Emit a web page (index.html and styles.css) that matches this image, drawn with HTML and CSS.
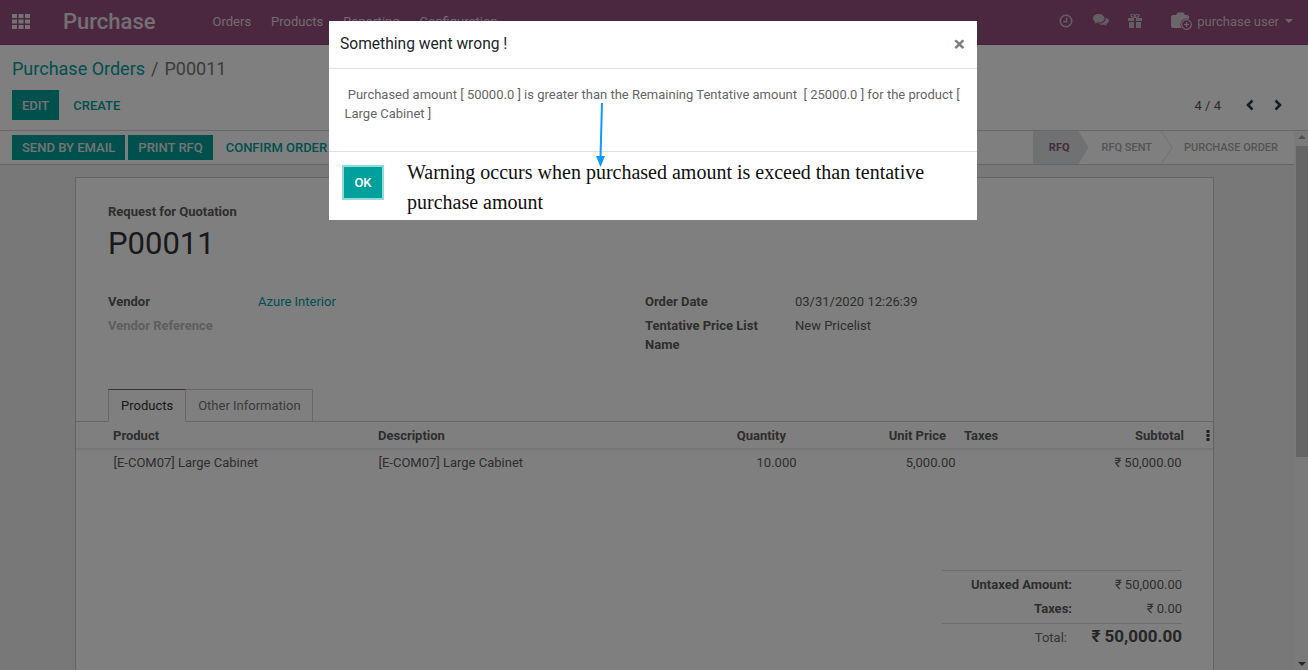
FILE: index.html
```html
<!DOCTYPE html>
<html lang="en">
<head>
  <meta charset="UTF-8">
  <meta name="viewport" content="width=device-width, initial-scale=1.0">
  <title>Purchase Orders</title>
  <link rel="stylesheet" href="styles.css">
</head>
<body>
  <div class="app">
    <header class="navbar">
      <svg class="apps-icon" width="18" height="15" viewBox="0 0 18 15">
        <path d="M0 0h5v4H0zM6.500 0h5v4h-5zM13 0h5v4h-5zM0 5.500h5v4H0zM6.500 5.500h5v4h-5zM13 5.500h5v4h-5zM0 11h5v4H0zM6.500 11h5v4h-5zM13 11h5v4h-5z"/>
      </svg>
      <span class="brand">Purchase</span>
      <nav class="menu">
        <a>Orders</a>
        <a>Products</a>
        <a>Reporting</a>
        <a>Configuration</a>
      </nav>
      <div class="systray">
        <svg class="tray-clock" width="14" height="14" viewBox="0 0 14 14">
          <circle cx="7" cy="7" r="5.700" fill="none" stroke="currentColor" stroke-width="1.600"/>
          <path d="M7.600 3.500v4.200H4.400" fill="none" stroke="currentColor" stroke-width="1.400"/>
        </svg>
        <svg class="tray-chat" width="16" height="14" viewBox="0 0 16 14">
          <path d="M5.800 0C2.600 0 0 1.900 0 4.300c0 1.400.9 2.600 2.200 3.400-.2.700-.6 1.300-1.100 1.800 1 0 2.100-.4 3-1.100.5.100 1.100.2 1.700.2 3.200 0 5.800-1.900 5.800-4.300S9 0 5.800 0z"/>
          <path d="M12.700 3.800c.1.200.1.400.1.600 0 2.900-3 5-6.700 5h-.6c1 .9 2.500 1.400 4.100 1.400.5 0 1 0 1.500-.2.800.7 1.900 1.100 3.100 1.200-.5-.5-.9-1.200-1.100-1.900 1.700-.7 2.900-1.900 2.900-3.100 0-1.300-1.300-2.300-3.300-3z"/>
        </svg>
        <svg class="tray-gift" width="14" height="14" viewBox="0 0 14 14">
          <path d="M0 4h6v3H0zM8 4h6v3H8zM1 8h5v6H1zM8 8h5v6H8z"/>
          <path d="M7 3.500C5 3.500 3 3 3 1.600 3 .600 3.800 0 4.600 0 6 0 6.800 1.700 7 3.500zm0 0c.2-1.800 1-3.500 2.400-3.500.8 0 1.600.6 1.600 1.600C11 3 9 3.500 7 3.500z" fill="none" stroke="currentColor" stroke-width="1.200"/>
        </svg>
        <div class="user">
          <svg class="avatar" width="22" height="19" viewBox="0 0 22 19">
            <path d="M2 3h3l1.500-2.500h6L14 3h2c1.100 0 2 .9 2 2v5H2z"/>
            <path d="M0 5c0-1.100.9-2 2-2h4v13H2c-1.100 0-2-.9-2-2z"/>
            <circle cx="9" cy="9" r="4.500" fill="none" stroke="currentColor" stroke-width="2"/>
            <path d="M2 10h10v6H2z"/>
            <circle cx="15.500" cy="12.500" r="6" fill="#965080"/>
            <circle cx="15.500" cy="12.500" r="4.800" fill="none" stroke="currentColor" stroke-width="1.200"/>
            <path d="M15.500 10v5M13 12.500h5" stroke="currentColor" stroke-width="1.200"/>
          </svg>
          <span>purchase user</span>
          <i class="caret"></i>
        </div>
      </div>
    </header>

    <section class="control-panel">
      <div class="breadcrumb"><a>Purchase Orders</a><span class="sep">/</span><span class="current">P00011</span></div>
      <div class="cp-buttons">
        <div class="cp-left">
          <button class="btn btn-primary edit-btn">EDIT</button>
          <button class="btn btn-link">CREATE</button>
        </div>
        <div class="pager">
          <span class="pager-count">4 / 4</span>
          <svg width="10" height="12" viewBox="0 0 10 12"><path d="M7.500 1.500 3 6l4.500 4.500" fill="none" stroke="currentColor" stroke-width="2.600"/></svg>
          <svg width="10" height="12" viewBox="0 0 10 12"><path d="M2.500 1.500 7 6l-4.500 4.500" fill="none" stroke="currentColor" stroke-width="2.600"/></svg>
        </div>
      </div>
    </section>

    <div class="main">
      <div class="main-column">
        <div class="statusbar">
          <div class="status-actions">
            <button class="btn btn-dark">SEND BY EMAIL</button>
            <button class="btn btn-dark">PRINT RFQ</button>
            <button class="btn btn-link">CONFIRM ORDER</button>
          </div>
          <div class="steps">
            <span class="step step-active">RFQ</span>
            <span class="step">RFQ SENT</span>
            <svg class="chevron" width="11" height="33" viewBox="0 0 11 33"><path d="M0 0 11 16.500 0 33"/></svg>
            <span class="step step-last">PURCHASE ORDER</span>
          </div>
        </div>

        <div class="content">
          <div class="sheet">
            <div class="sheet-head">
              <div class="doc-label">Request for Quotation</div>
              <h1 class="doc-name">P00011</h1>
            </div>

            <div class="fields">
              <div class="field-col">
                <div class="field"><label>Vendor</label><a>Azure Interior</a></div>
                <div class="field"><label class="muted">Vendor Reference</label><span></span></div>
              </div>
              <div class="field-col">
                <div class="field"><label>Order Date</label><span>03/31/2020 12:26:39</span></div>
                <div class="field"><label>Tentative Price List Name</label><span>New Pricelist</span></div>
              </div>
            </div>

            <div class="tabs">
              <span class="tab tab-active">Products</span>
              <span class="tab">Other Information</span>
            </div>

            <div class="lines-head">
              <span>Product</span>
              <span>Description</span>
              <span class="num">Quantity</span>
              <span class="num">Unit Price</span>
              <span class="taxes-col">Taxes</span>
              <span class="num">Subtotal</span>
              <svg class="kebab" width="4" height="11" viewBox="0 0 4 11"><path d="M.5 0h3v3h-3zM.5 4h3v3h-3zM.5 8h3v3h-3z"/></svg>
            </div>
            <div class="lines-row">
              <span>[E-COM07] Large Cabinet</span>
              <span>[E-COM07] Large Cabinet</span>
              <span class="num">10.000</span>
              <span class="num">5,000.00</span>
              <span class="num">₹ 50,000.00</span>
            </div>

            <div class="totals">
              <div class="total-row"><b>Untaxed Amount:</b><span>₹ 50,000.00</span></div>
              <div class="total-row"><b>Taxes:</b><span>₹ 0.00</span></div>
              <div class="total-row grand"><span class="grand-label">Total:</span><b class="grand-value">₹ 50,000.00</b></div>
            </div>
          </div>
        </div>
      </div>

      <div class="scrollbar">
        <i class="arrow-up"></i>
        <div class="thumb"></div>
        <i class="arrow-down"></i>
      </div>
    </div>
  </div>

  <div class="backdrop"></div>

  <div class="modal">
    <div class="modal-header">
      <h4>Something went wrong !</h4>
      <span class="close">×</span>
    </div>
    <div class="modal-body">
      <p>&nbsp;Purchased amount [ 50000.0 ] is greater than the Remaining Tentative amount &nbsp;[ 25000.0 ] for the product [ Large Cabinet ]</p>
    </div>
    <div class="modal-footer">
      <button class="btn-ok">OK</button>
      <p class="note">Warning occurs when purchased amount is exceed than tentative purchase amount</p>
    </div>
  </div>

  <svg class="annotation" width="12" height="66" viewBox="0 0 12 66">
    <path d="M7 0 5.500 54" stroke="#0f9bfb" stroke-width="2" fill="none"/>
    <path d="M1 53h9L5.500 64z" fill="#0f9bfb"/>
  </svg>
</body>
</html>
```

FILE: styles.css
```css
*{box-sizing:border-box;}
html,body{height:100%;}
body{margin:0; overflow:hidden; font-family:Roboto,"Noto Sans",sans-serif; font-size:13px; color:#5c5c5c; background:#fff;}
a{color:#00a09d;}
.app{display:flex; flex-direction:column; height:100vh;}

/* top bar */
.navbar{display:flex; align-items:center; flex:0 0 45px; padding:0 15px 2px 12px; background:#965080; border-bottom:1px solid #8a4a75; color:#fff;}
.apps-icon{fill:#e6e6e6; flex:none;}
.brand{margin-left:33px; font-size:22px; font-weight:500; color:#e6e0e4;}
.menu{display:flex; gap:20px; margin-left:57px;}
.menu a{color:#e0d8dd;}
.systray{display:flex; align-items:center; margin-left:auto; color:#c9bcc4;}
.systray svg{fill:currentColor; flex:none;}
.tray-chat{margin-left:20px;}
.tray-gift{margin-left:19px;}
.user{display:flex; align-items:center; margin-left:29px; color:#d6ccd2;}
.user span{margin-left:4px; margin-right:6px;}
.caret{border:4px solid transparent; border-top-color:currentColor; border-bottom:0;}

/* control panel */
.control-panel{flex:0 0 86px; padding:13px 25px 0 12px; border-bottom:1px solid #cfcfcf;}
.breadcrumb{display:flex; align-items:center; height:20px; font-size:18px;}
.breadcrumb a{color:#00a09d;}
.sep{margin:0 6px; color:#777;}
.current{color:#777;}
.cp-buttons{display:flex; justify-content:space-between; align-items:center; margin-top:12px;}
.cp-left{display:flex;}
.btn{height:25px; padding:0 10px; border:0; font-family:inherit; font-size:13px; font-weight:500;}
.btn-primary{height:30px; background:#00a09d; color:#e8e8e8;}
.btn-dark{background:#00a09d; color:#e8e8e8;}
.btn-link{height:30px; padding:0 14px; background:transparent; color:#00a09d;}
.pager{display:flex; align-items:center; gap:18px; color:#2c3e4a;}
.pager-count{margin-right:6px; color:#555;}

/* main area */
.main{display:flex; flex:1; min-height:0;}
.main-column{display:flex; flex-direction:column; flex:1; min-width:0;}
.statusbar{display:flex; justify-content:space-between; flex:0 0 34px; padding-left:12px; border-bottom:1px solid #cfcfcf;}
.status-actions{display:flex; align-items:center; gap:3px;}
.status-actions .btn-link{height:25px; padding:0 10px;}
.steps{display:flex; align-items:stretch;}
.step{display:flex; align-items:center; padding:0 9px 0 13px; font-size:11px; font-weight:500; color:#a8a8a8;}
.step-active{padding:0 19px 0 16px; background:#dee2e6; color:#875a7b; font-weight:700; clip-path:polygon(0 0,calc(100% - 10px) 0,100% 50%,calc(100% - 10px) 100%,0 100%);}
.step-last{padding:0 16px 0 12px;}
.chevron{fill:none; stroke:#dee2e6; stroke-width:1; flex:none;}

.content{flex:1; min-height:0; overflow:hidden; padding:12px 0 0 75px; background:#f0f0f0;}
.sheet{width:1139px; height:600px; padding-top:26px; background:#fff; border:1px solid #c9c9c9;}
.sheet-head{padding-left:32px;}
.doc-label{font-weight:700;}
.doc-name{margin:6px 0 0; font-size:31px; line-height:38px; font-weight:400; color:#333;}

.fields{display:grid; grid-template-columns:537px 1fr; margin-top:29px; padding-left:32px;}
.field{display:flex; margin-bottom:5px; line-height:19px;}
.field label{width:150px; flex:none; padding-right:20px; font-weight:700;}
.field a{color:#00a09d;}
.muted{color:#bdbdbd;}

.tabs{display:flex; margin-top:30px; padding-left:32px; border-bottom:1px solid #cfcfcf;}
.tab{height:33px; margin-bottom:-1px; padding:0 12px; line-height:32px; border:1px solid #cfcfcf; border-left:0; color:#777;}
.tab:last-child{padding-right:11px;}
.tab-active{border-left:1px solid #cfcfcf; border-top:1px solid #875a7b; border-bottom-color:#fff; color:#333;}

.lines-head,.lines-row{display:grid; align-items:center;}
.lines-head{grid-template-columns:265px 302px 106px 160px 18px 100px 120px 31px; height:27px; padding-left:37px; font-weight:700; border-bottom:1px solid #e8e8e8; box-shadow:0 1px 2px rgba(0,0,0,.08);}
.taxes-col{grid-column:6;}
.kebab{fill:#444; margin-left:22px;}
.lines-row{grid-template-columns:265px 308px 110px 159px 226px; height:27px; padding-left:37.500px;}
.num{text-align:right;}

.totals{width:240px; margin:94px 0 0 866px; border-top:1px solid #dcdcdc;}
.total-row{display:grid; grid-template-columns:130px 110px; align-items:center; height:24px; text-align:right;}
.total-row:first-child{margin-top:1px;}
.grand{grid-template-columns:125px 115px; height:27px; margin-top:3px; border-top:1px solid #dcdcdc;}
.grand-value{font-size:17px; line-height:24px; padding-bottom:2px; color:#4c4c4c;}
.grand-label{color:#6c6c6c;}

/* scrollbar */
.scrollbar{position:relative; flex:0 0 14px; padding-left:2px; background:#f4f4f4;}
.thumb{height:311px; margin-top:15px; background:#cacaca;}
.arrow-up,.arrow-down{position:absolute; left:4px; border:4px solid transparent;}
.arrow-up{top:4px; border-bottom-color:#a0a0a0; border-top:0;}
.arrow-down{bottom:4px; border-top-color:#505050; border-bottom:0;}

/* dialog */
.backdrop{position:fixed; inset:0; background:rgba(0,0,0,.5);}
.modal{position:fixed; top:21px; left:329px; width:648px; height:199px; background:#fff;}
.modal-header{display:flex; justify-content:space-between; align-items:center; height:48px; padding:0 12px 2px 11px; border-bottom:1px solid #dee2e6;}
.modal-header h4{margin:0; font-size:15.600px; font-weight:400; color:#212529;}
.close{font-size:21px; font-weight:700; color:#7d7d7d;}
.modal-body{height:83px; padding:16px 15.500px; border-bottom:1px solid #dee2e6;}
.modal-body p{margin:0; line-height:19px; color:#666;}
.modal-footer{display:flex; padding:0 13px;}
.btn-ok{flex:none; width:42px; height:35px; margin:13px 23px 0 0; border:2px solid #8fdcd8; background:#00a09d; color:#fff; font-family:inherit; font-size:13px; font-weight:500;}
.note{margin:5px 0 0; font-family:"Liberation Serif",serif; font-size:20px; line-height:30px; color:#111;}

.annotation{position:fixed; top:103px; left:595px;}
```
